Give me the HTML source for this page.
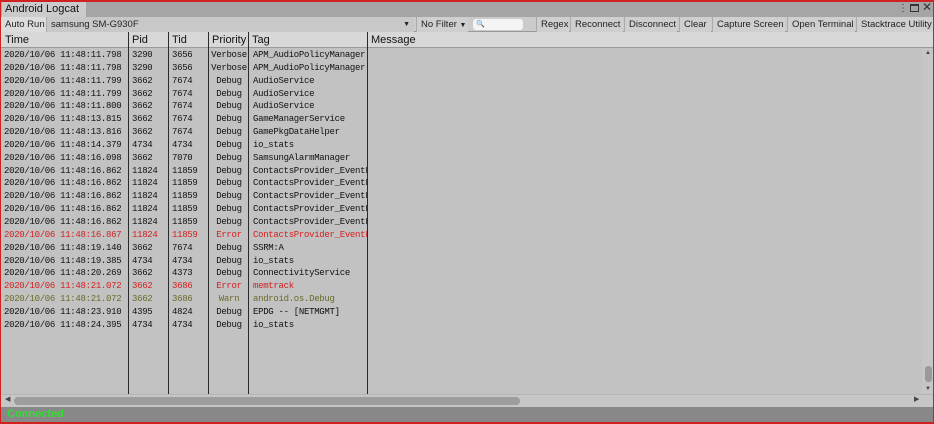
<!DOCTYPE html>
<html><head><style>
*{margin:0;padding:0;box-sizing:border-box}
body{width:934px;height:424px;overflow:hidden;background:#c2c2c2;font-family:"Liberation Sans",sans-serif;position:relative}
.frame{position:absolute;left:0;top:0;width:934px;height:424px;border:1px solid #d02020;border-top-width:2px;border-bottom-width:2px;pointer-events:none;z-index:10}
.title{position:absolute;left:0;top:0;width:934px;height:17px;background:#a5a5a5}
.tab{position:absolute;left:2px;top:2px;width:84px;height:15px;background:#cbcbcb;font-size:11px;line-height:15px;padding-left:3px;color:#111}
.tb{position:absolute;left:0;top:17px;width:934px;height:15px;background:#cbcbcb;border-bottom:1px solid #999}
.b{position:absolute;top:0;height:15px;font-size:9.5px;line-height:15px;color:#222;border-left:1px solid #aaa;padding-left:4px;background:#cfcfcf}
.hdr{position:absolute;left:0;top:32px;width:934px;height:16px;background:#d8d8d8;border-bottom:1px solid #999;font-size:11px;line-height:16px;color:#111}
.hdr span{position:absolute;top:0;padding-left:3px}
.vl{position:absolute;top:32px;height:362px;width:1px;background:#2a2a2a}
.rows{position:absolute;left:0;top:49px;font-family:"Liberation Mono","DejaVu Sans Mono",monospace;font-size:9px;letter-spacing:-0.3px;color:#111}
.r{position:relative;height:12.85px;line-height:12.85px;white-space:nowrap}
.r span{position:absolute;top:0}
.c1{left:4px}.c2{left:132px}.c3{left:172px}.c4{left:210px;width:38px;text-align:center}.c5{left:253px;width:114px;overflow:hidden}
.e{color:#d42020}.w{color:#6b6b2a}
</style></head><body>
<div class="title"><div class="tab">Android Logcat</div>
<div style="position:absolute;left:898px;top:3px;font-size:10px;color:#333">⋮</div>
<div style="position:absolute;left:910px;top:4px;width:9px;height:8px;border:1px solid #333;border-top-width:2px"></div>
<div style="position:absolute;left:922px;top:0px;font-size:12px;color:#333">✕</div>
</div>
<div class="tb">
<div class="b" style="left:1px;width:45px;border:none;background:#dcdcdc">Auto Run</div>
<div class="b" style="left:46px;width:368px;background:#c8c8c8">samsung SM-G930F<span style="position:absolute;right:4px;font-size:7px">▼</span></div>
<div class="b" style="left:416px;width:52px">No Filter <span style="font-size:7px">▼</span></div>
<div style="position:absolute;left:473px;top:2px;width:50px;height:11px;background:#f4f4f4;border-radius:3px;font-size:7px;line-height:11px;padding-left:3px;color:#666">🔍</div>
<div class="b" style="left:536px;width:33px">Regex</div>
<div class="b" style="left:570px;width:53px">Reconnect</div>
<div class="b" style="left:624px;width:53px">Disconnect</div>
<div class="b" style="left:679px;width:32px">Clear</div>
<div class="b" style="left:712px;width:73px">Capture Screen</div>
<div class="b" style="left:787px;width:68px">Open Terminal</div>
<div class="b" style="left:856px;width:78px">Stacktrace Utility</div>
</div>
<div class="hdr"><span style="left:2px">Time</span><span style="left:129px">Pid</span><span style="left:169px">Tid</span><span style="left:209px">Priority</span><span style="left:249px">Tag</span><span style="left:368px">Message</span></div>
<div class="vl" style="left:128px"></div><div class="vl" style="left:168px"></div><div class="vl" style="left:208px"></div><div class="vl" style="left:248px"></div><div class="vl" style="left:367px"></div>
<div class="rows">
<div class="r"><span class="c1">2020/10/06 11:48:11.798</span><span class="c2">3290</span><span class="c3">3656</span><span class="c4">Verbose</span><span class="c5">APM_AudioPolicyManager</span></div>
<div class="r"><span class="c1">2020/10/06 11:48:11.798</span><span class="c2">3290</span><span class="c3">3656</span><span class="c4">Verbose</span><span class="c5">APM_AudioPolicyManager</span></div>
<div class="r"><span class="c1">2020/10/06 11:48:11.799</span><span class="c2">3662</span><span class="c3">7674</span><span class="c4">Debug</span><span class="c5">AudioService</span></div>
<div class="r"><span class="c1">2020/10/06 11:48:11.799</span><span class="c2">3662</span><span class="c3">7674</span><span class="c4">Debug</span><span class="c5">AudioService</span></div>
<div class="r"><span class="c1">2020/10/06 11:48:11.800</span><span class="c2">3662</span><span class="c3">7674</span><span class="c4">Debug</span><span class="c5">AudioService</span></div>
<div class="r"><span class="c1">2020/10/06 11:48:13.815</span><span class="c2">3662</span><span class="c3">7674</span><span class="c4">Debug</span><span class="c5">GameManagerService</span></div>
<div class="r"><span class="c1">2020/10/06 11:48:13.816</span><span class="c2">3662</span><span class="c3">7674</span><span class="c4">Debug</span><span class="c5">GamePkgDataHelper</span></div>
<div class="r"><span class="c1">2020/10/06 11:48:14.379</span><span class="c2">4734</span><span class="c3">4734</span><span class="c4">Debug</span><span class="c5">io_stats</span></div>
<div class="r"><span class="c1">2020/10/06 11:48:16.098</span><span class="c2">3662</span><span class="c3">7070</span><span class="c4">Debug</span><span class="c5">SamsungAlarmManager</span></div>
<div class="r"><span class="c1">2020/10/06 11:48:16.862</span><span class="c2">11824</span><span class="c3">11859</span><span class="c4">Debug</span><span class="c5">ContactsProvider_EventLog</span></div>
<div class="r"><span class="c1">2020/10/06 11:48:16.862</span><span class="c2">11824</span><span class="c3">11859</span><span class="c4">Debug</span><span class="c5">ContactsProvider_EventLog</span></div>
<div class="r"><span class="c1">2020/10/06 11:48:16.862</span><span class="c2">11824</span><span class="c3">11859</span><span class="c4">Debug</span><span class="c5">ContactsProvider_EventLog</span></div>
<div class="r"><span class="c1">2020/10/06 11:48:16.862</span><span class="c2">11824</span><span class="c3">11859</span><span class="c4">Debug</span><span class="c5">ContactsProvider_EventLog</span></div>
<div class="r"><span class="c1">2020/10/06 11:48:16.862</span><span class="c2">11824</span><span class="c3">11859</span><span class="c4">Debug</span><span class="c5">ContactsProvider_EventLog</span></div>
<div class="r e"><span class="c1">2020/10/06 11:48:16.867</span><span class="c2">11824</span><span class="c3">11859</span><span class="c4">Error</span><span class="c5">ContactsProvider_EventLog</span></div>
<div class="r"><span class="c1">2020/10/06 11:48:19.140</span><span class="c2">3662</span><span class="c3">7674</span><span class="c4">Debug</span><span class="c5">SSRM:A</span></div>
<div class="r"><span class="c1">2020/10/06 11:48:19.385</span><span class="c2">4734</span><span class="c3">4734</span><span class="c4">Debug</span><span class="c5">io_stats</span></div>
<div class="r"><span class="c1">2020/10/06 11:48:20.269</span><span class="c2">3662</span><span class="c3">4373</span><span class="c4">Debug</span><span class="c5">ConnectivityService</span></div>
<div class="r e"><span class="c1">2020/10/06 11:48:21.072</span><span class="c2">3662</span><span class="c3">3686</span><span class="c4">Error</span><span class="c5">memtrack</span></div>
<div class="r w"><span class="c1">2020/10/06 11:48:21.072</span><span class="c2">3662</span><span class="c3">3686</span><span class="c4">Warn</span><span class="c5">android.os.Debug</span></div>
<div class="r"><span class="c1">2020/10/06 11:48:23.910</span><span class="c2">4395</span><span class="c3">4824</span><span class="c4">Debug</span><span class="c5">EPDG -- [NETMGMT]</span></div>
<div class="r"><span class="c1">2020/10/06 11:48:24.395</span><span class="c2">4734</span><span class="c3">4734</span><span class="c4">Debug</span><span class="c5">io_stats</span></div>
</div>
<div style="position:absolute;left:922px;top:49px;width:11px;height:345px;background:#c6c6c6"></div>
<div style="position:absolute;left:925px;top:50px;font-size:6px;color:#444">▲</div>
<div style="position:absolute;left:925px;top:386px;font-size:6px;color:#444">▼</div>
<div style="position:absolute;left:925px;top:366px;width:7px;height:16px;background:#9a9a9a;border-radius:3px"></div>
<div style="position:absolute;left:0;top:394px;width:934px;height:13px;background:#c6c6c6;border-top:1px solid #b5b5b5"></div>
<div style="position:absolute;left:14px;top:397px;width:506px;height:8px;background:#9d9d9d;border-radius:4px"></div>
<div style="position:absolute;left:5px;top:395px;font-size:7px;color:#444">◀</div>
<div style="position:absolute;left:914px;top:395px;font-size:7px;color:#444">▶</div>
<div style="position:absolute;left:0;top:407px;width:934px;height:17px;background:#888;font-size:11px;line-height:14px;padding-left:7px;color:#33dd33;font-weight:bold">Connected</div>
<div class="frame"></div>
</body></html>
